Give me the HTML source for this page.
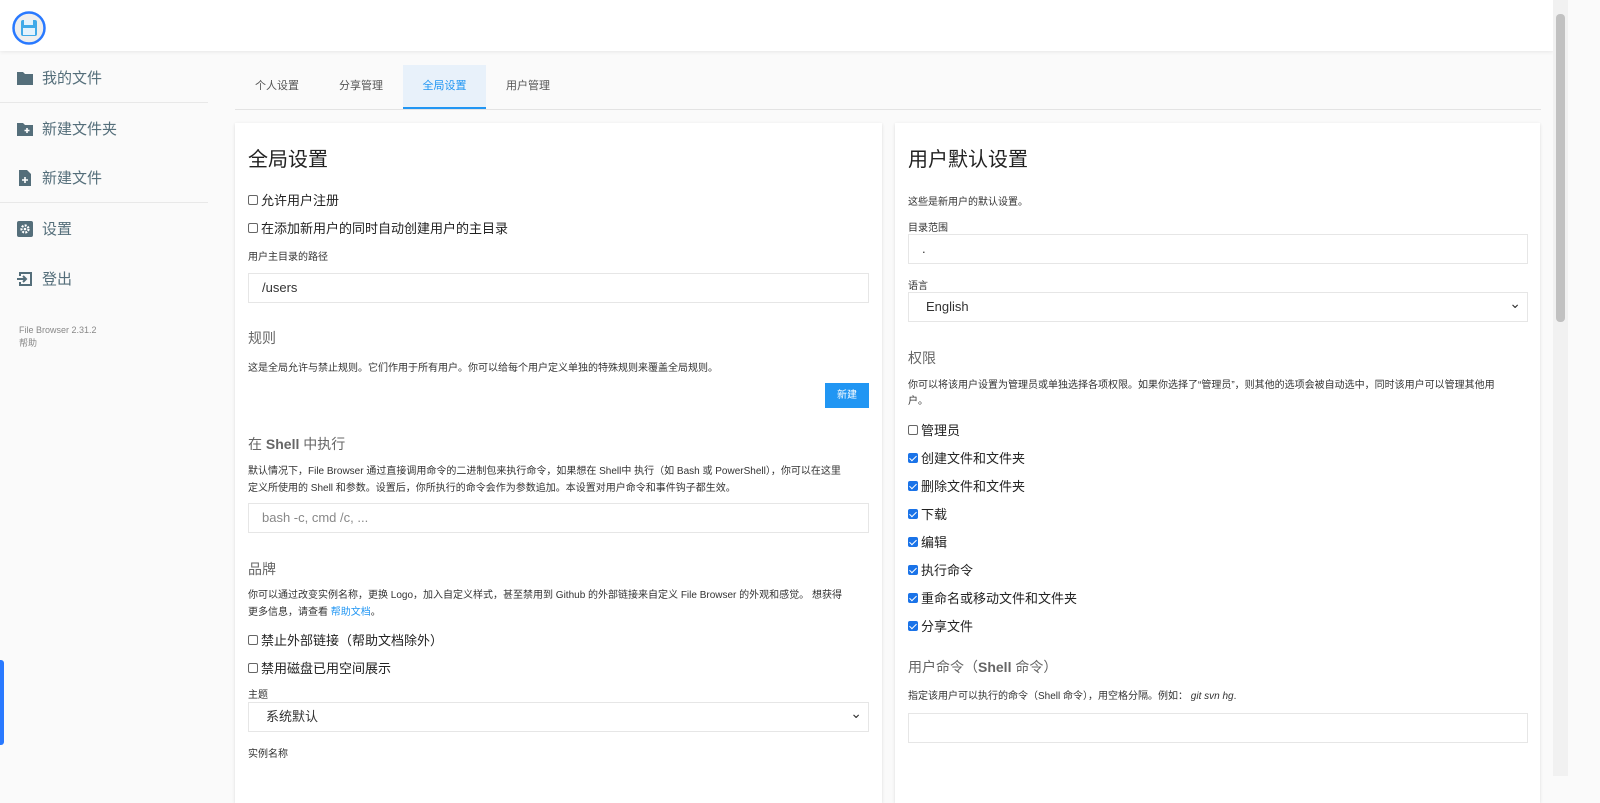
<!DOCTYPE html>
<html><head><meta charset="utf-8">
<style>
*{box-sizing:border-box;margin:0;padding:0}
body{width:1600px;height:776px;overflow:hidden;background:#fafafa;font-family:"Liberation Sans","Noto Sans CJK SC",sans-serif;color:#333;position:relative}
.a{position:absolute;white-space:nowrap}
header{position:absolute;left:0;top:0;width:1553px;height:51px;background:#fff;box-shadow:0 1px 4px rgba(0,0,0,.08)}
.nav{position:absolute;left:17px;font-size:15px;color:#546e7a;display:flex;align-items:center}
.nav span{margin-left:9px}
.hr{position:absolute;left:0;width:208px;height:1px;background:#e8e8e8}
.tab{position:absolute;top:65px;height:44px;line-height:42px;font-size:11px;color:#555;text-align:center}
.card{position:absolute;top:123px;background:#fff;box-shadow:0 1px 3px rgba(0,0,0,.12);height:680px}
.t{font-size:20px;color:#222}
.h{font-size:14px;color:#666}
.s{font-size:10px;color:#333}
.cb{font-size:13px;color:#222;display:flex;align-items:center}
.cb i{display:inline-block;width:10px;height:10px;border:1px solid #666;border-radius:2px;margin-right:3px}
.cb i.on{background:#1a73e8;border-color:#1a73e8;position:relative}
.cb i.on:after{content:"";position:absolute;left:2px;top:0px;width:3px;height:6px;border:solid #fff;border-width:0 1.5px 1.5px 0;transform:rotate(45deg)}
.in{position:absolute;height:30px;border:1px solid #e6e6e6;background:#fff;font-size:13px;padding-left:13px;line-height:28px;color:#333}
.sel:after{content:"⌄";position:absolute;right:6px;top:-4px;font-size:14px}
</style></head><body>
<header>
<svg class="a" style="left:12px;top:11px" width="34" height="34" viewBox="0 0 34 34"><circle cx="17" cy="17" r="15.5" fill="#eee" stroke="#2979ff" stroke-width="2.5"/><rect x="9" y="9" width="16" height="16" rx="2" fill="#40a9e8"/><rect x="12" y="9" width="9" height="5" fill="#e3f2fd"/><rect x="11" y="17" width="12" height="7" fill="#e3f2fd"/></svg>
</header>
<div class="nav" style="top:67px"><svg width="16" height="14" viewBox="0 0 16 14"><path d="M0 1h6l2 2h8v11H0z" fill="#546e7a"/></svg><span>我的文件</span></div>
<div class="hr" style="top:102px"></div>
<div class="nav" style="top:118px"><svg width="16" height="14" viewBox="0 0 16 14"><path d="M0 1h6l2 2h8v11H0z" fill="#546e7a"/><path d="M10 6v5M7.5 8.5h5" stroke="#fff" stroke-width="1.6"/></svg><span>新建文件夹</span></div>
<div class="nav" style="top:167px"><svg width="16" height="16" viewBox="0 0 16 16"><path d="M2 0h8l4 4v12H2z" fill="#546e7a"/><path d="M8 7v6M5 10h6" stroke="#fff" stroke-width="1.6"/></svg><span>新建文件</span></div>
<div class="hr" style="top:202px"></div>
<div class="nav" style="top:218px"><svg width="16" height="16" viewBox="0 0 16 16"><rect width="16" height="16" rx="2" fill="#546e7a"/><circle cx="8" cy="8" r="3.5" fill="none" stroke="#fff" stroke-width="2.2" stroke-dasharray="2 1.2"/><circle cx="8" cy="8" r="1.3" fill="#fff"/></svg><span>设置</span></div>
<div class="nav" style="top:268px"><svg width="16" height="16" viewBox="0 0 16 16"><path d="M3 5V2h11v12H3v-3" fill="none" stroke="#546e7a" stroke-width="2"/><path d="M0 8h9M6 5l3 3-3 3" fill="none" stroke="#546e7a" stroke-width="2"/></svg><span>登出</span></div>
<div class="a" style="left:19px;top:324px;font-size:9px;color:#888;line-height:13px">File Browser 2.31.2<br>帮助</div>
<div class="a" style="left:0;top:660px;width:4px;height:85px;background:#2979ff;border-radius:0 3px 3px 0"></div>

<div class="a" style="left:235px;top:109px;width:1306px;height:1px;background:#e3e3e3"></div>
<div class="tab" style="left:235px;width:84px">个人设置</div>
<div class="tab" style="left:319px;width:84px">分享管理</div>
<div class="tab" style="left:403px;width:83px;background:#e8f1fa;color:#2196f3;border-bottom:2px solid #2196f3">全局设置</div>
<div class="tab" style="left:486px;width:84px">用户管理</div>

<div class="card" style="left:235px;width:647px">
<div class="a t" style="left:13px;top:20px">全局设置</div>
<div class="a cb" style="left:13px;top:67px"><i></i>允许用户注册</div>
<div class="a cb" style="left:13px;top:95px"><i></i>在添加新用户的同时自动创建用户的主目录</div>
<div class="a s" style="left:13px;top:125px">用户主目录的路径</div>
<div class="in" style="left:13px;top:150px;width:621px">/users</div>
<div class="a h" style="left:13px;top:205px">规则</div>
<div class="a s" style="left:13px;top:236px">这是全局允许与禁止规则。它们作用于所有用户。你可以给每个用户定义单独的特殊规则来覆盖全局规则。</div>
<div class="a" style="left:590px;top:260px;width:44px;height:25px;background:#2196f3;color:#fff;font-size:10px;line-height:25px;text-align:center">新建</div>
<div class="a h" style="left:13px;top:311px">在 <b>Shell</b> 中执行</div>
<div class="a s" style="left:13px;top:340px;line-height:17px">默认情况下，File Browser 通过直接调用命令的二进制包来执行命令，如果想在 Shell中 执行（如 Bash 或 PowerShell），你可以在这里<br>定义所使用的 Shell 和参数。设置后，你所执行的命令会作为参数追加。本设置对用户命令和事件钩子都生效。</div>
<div class="in" style="left:13px;top:380px;width:621px;color:#888">bash -c, cmd /c, ...</div>
<div class="a h" style="left:13px;top:436px">品牌</div>
<div class="a s" style="left:13px;top:464px;line-height:17px">你可以通过改变实例名称，更换 Logo，加入自定义样式，甚至禁用到 Github 的外部链接来自定义 File Browser 的外观和感觉。 想获得<br>更多信息，请查看 <span style="color:#2196f3">帮助文档</span>。</div>
<div class="a cb" style="left:13px;top:507px"><i></i>禁止外部链接（帮助文档除外）</div>
<div class="a cb" style="left:13px;top:535px"><i></i>禁用磁盘已用空间展示</div>
<div class="a s" style="left:13px;top:563px">主题</div>
<div class="in sel" style="left:13px;top:579px;width:621px;padding-left:17px">系统默认</div>
<div class="a s" style="left:13px;top:622px">实例名称</div>
</div>

<div class="card" style="left:895px;width:645px">
<div class="a t" style="left:13px;top:20px">用户默认设置</div>
<div class="a s" style="left:13px;top:70px">这些是新用户的默认设置。</div>
<div class="a s" style="left:13px;top:96px">目录范围</div>
<div class="in" style="left:13px;top:111px;width:620px">.</div>
<div class="a s" style="left:13px;top:154px">语言</div>
<div class="in sel" style="left:13px;top:169px;width:620px;padding-left:17px">English</div>
<div class="a h" style="left:13px;top:225px">权限</div>
<div class="a s" style="left:13px;top:255px;line-height:16px">你可以将该用户设置为管理员或单独选择各项权限。如果你选择了“管理员”，则其他的选项会被自动选中，同时该用户可以管理其他用<br>户。</div>
<div class="a cb" style="left:13px;top:297px"><i></i>管理员</div>
<div class="a cb" style="left:13px;top:325px"><i class="on"></i>创建文件和文件夹</div>
<div class="a cb" style="left:13px;top:353px"><i class="on"></i>删除文件和文件夹</div>
<div class="a cb" style="left:13px;top:381px"><i class="on"></i>下载</div>
<div class="a cb" style="left:13px;top:409px"><i class="on"></i>编辑</div>
<div class="a cb" style="left:13px;top:437px"><i class="on"></i>执行命令</div>
<div class="a cb" style="left:13px;top:465px"><i class="on"></i>重命名或移动文件和文件夹</div>
<div class="a cb" style="left:13px;top:493px"><i class="on"></i>分享文件</div>
<div class="a h" style="left:13px;top:534px">用户命令（<b>Shell</b> 命令）</div>
<div class="a s" style="left:13px;top:564px">指定该用户可以执行的命令（Shell 命令），用空格分隔。例如： <i>git svn hg</i>.</div>
<div class="in" style="left:13px;top:590px;width:620px"></div>
</div>

<div class="a" style="left:1553px;top:0;width:15px;height:776px;background:#f1f1f1"></div>
<div class="a" style="left:1556px;top:14px;width:9px;height:308px;background:#c1c1c1;border-radius:4px"></div>
</body></html>
